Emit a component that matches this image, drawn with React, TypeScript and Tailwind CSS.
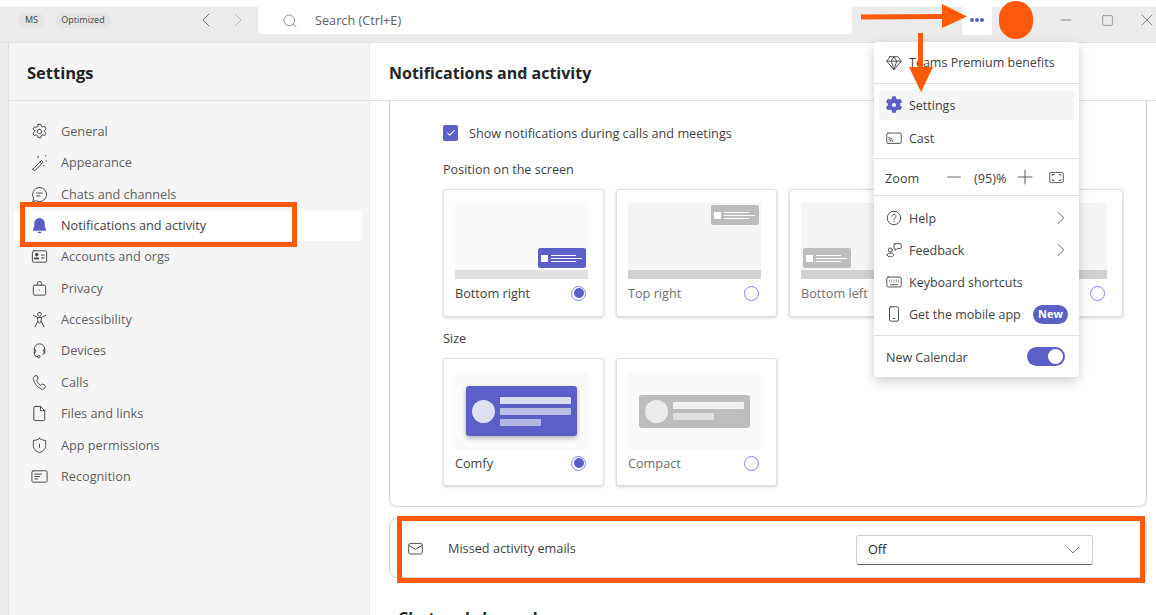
import React from "react";
import { ChevronLeft, ChevronRight, ChevronDown, Search, Minus, Square, X, Plus, Check } from "lucide-react";

const FONT = "font-['Open_Sans','Noto_Sans',sans-serif]";

function Icon({ children, cls = "w-[18px] h-[18px] shrink-0 text-[#424242]" }: { children: React.ReactNode; cls?: string }) {
  return (
    <svg viewBox="0 0 20 20" fill="none" stroke="currentColor" strokeWidth="1" strokeLinecap="round" strokeLinejoin="round" className={cls}>
      {children}
    </svg>
  );
}

const gear = (
  <path d="M8.600 2.400h2.800l.5 2 1.600.9 2-.6 1.400 2.400-1.500 1.400v1.900l1.500 1.400-1.400 2.400-2-.6-1.600.9-.5 2H8.600l-.5-2-1.600-.9-2 .6-1.400-2.400 1.500-1.400V8.900L3.100 7.500l1.400-2.400 2 .6 1.600-.9z M10 7.700a2.300 2.300 0 1 0 0 4.600 2.300 2.300 0 0 0 0-4.600z" />
);

const navItems: { label: string; icon: React.ReactNode }[] = [
  { label: "General", icon: gear },
  {
    label: "Appearance",
    icon: <path d="M3 17l9-9 1.800 1.800-9 9L3 17z M10.500 9.500l1.800 1.800 M8.500 3.500v1.500 M16.500 2.500v.5 M17.500 8.500h-.5 M14.500 13v.5" />,
  },
  {
    label: "Chats and channels",
    icon: <path d="M10 2.500a7.500 7.500 0 1 1-3.600 14.100L3 17.500l.9-3.400A7.500 7.500 0 0 1 10 2.500z M7 8.500h6 M7 11.500h3.500" />,
  },
  { label: "Notifications and activity", icon: null },
  {
    label: "Accounts and orgs",
    icon: (
      <>
        <rect x="2.500" y="4" width="15" height="12" rx="1.500" />
        <circle cx="7" cy="8" r="1.300" fill="currentColor" />
        <path d="M5 12.500h4v-1H5z" fill="currentColor" />
        <path d="M12 8.500h3 M12 11.500h3" />
      </>
    ),
  },
  {
    label: "Privacy",
    icon: <path d="M5 6.500h10a1.500 1.500 0 0 1 1.500 1.500v7.500A1.500 1.500 0 0 1 15 17H5a1.500 1.500 0 0 1-1.500-1.500V8A1.500 1.500 0 0 1 5 6.500z M7.700 6.500V4.800a2.300 2.300 0 0 1 4.600 0v1.700 M10 11.700v.01" />,
  },
  {
    label: "Accessibility",
    icon: <path d="M10 2.500a2 2 0 1 1 0 4 2 2 0 0 1 0-4z M3.500 5.500l4.500 2.500h4l4.500-2.500 M8 8l.3 4-3 5.500 M12 8l-.3 4 3 5.500 M8.300 12l1.700 2 1.700-2" />,
  },
  {
    label: "Devices",
    icon: <path d="M4.500 12.500V8.500a5.500 5.500 0 0 1 11 0v3.500c0 1.500-1 2-2 2 M4.500 8.500c1 0 1.500.5 1.500 1.500v1c0 1-.5 1.500-1.500 1.500 M15.500 8.500c-1 0-1.500.5-1.500 1.500v1c0 1 .5 1.500 1.500 1.500 M4.500 12.500c0 2.500 1 4 3.500 4 M8 16.500a1.300 1.300 0 1 0 2.600 0 1.300 1.300 0 0 0-2.600 0z" />,
  },
  {
    label: "Calls",
    icon: <path d="M6.500 2.800 4.800 3.500C3.500 4.200 3.200 5.500 3.600 7c1 4.200 4.300 8.300 8.300 9.800 1.300.5 2.600.2 3.400-.9l.8-1.200c.4-.6.2-1.300-.4-1.700l-2-1.200c-.6-.3-1.200-.2-1.600.3l-.7.8c-2.200-1-3.800-3-4.500-5.200l.9-.6c.5-.4.7-1 .5-1.600L7.800 3.400c-.2-.5-.8-.8-1.300-.6z" />,
  },
  {
    label: "Files and links",
    icon: <path d="M5.500 2.500h5.500l4.500 4.500v9a1.500 1.500 0 0 1-1.500 1.500H5.500A1.500 1.500 0 0 1 4 16V4a1.500 1.500 0 0 1 1.500-1.500z M11 2.500V7h4.500" />,
  },
  {
    label: "App permissions",
    icon: <path d="M10 2.500c2 1.500 4 2 6.500 2.200v5.300c0 3.500-2.500 6-6.500 7.500-4-1.500-6.500-4-6.500-7.500V4.700C6 4.500 8 4 10 2.500z M10 8.500v.01 M10 9v3" />,
  },
  {
    label: "Recognition",
    icon: <path d="M3.500 4h13A1.500 1.500 0 0 1 18 5.500v9a1.500 1.500 0 0 1-1.500 1.500h-13A1.500 1.500 0 0 1 2 14.500v-9A1.500 1.500 0 0 1 3.500 4z M5 7.500h7 M5 10h5 M5 12.500h3" />,
  },
];

function MiniToast({ active, corner }: { active?: boolean; corner: "br" | "tr" | "bl" | "tl" }) {
  const justify = corner === "br" || corner === "tr" ? "justify-end" : "justify-start";
  const align = corner === "br" || corner === "bl" ? "items-end" : "items-start";
  return (
    <div className={`flex flex-col w-[133px] h-[76px] shrink-0 ${active ? "bg-[#fafafa]" : "bg-[#f5f5f5]"}`}>
      <div className={`flex flex-1 p-[2px] ${justify} ${align}`}>
        <div className={`flex items-center gap-[3px] w-[48px] h-[20px] rounded-[2px] px-[3px] ${active ? "bg-[#5b5fc7]" : "bg-[#bdbdbd]"}`}>
          <div className="w-[7px] h-[7px] bg-white shrink-0" />
          <div className="flex flex-col gap-[2px] flex-1">
            <div className="h-px w-[25px] bg-white" />
            <div className="h-px w-[31px] bg-white" />
            <div className="h-px w-[25px] bg-white" />
          </div>
        </div>
      </div>
      <div className={`h-[9px] ${active ? "bg-[#e0e0e0]" : "bg-[#d1d1d1]"}`} />
    </div>
  );
}

function Radio({ on }: { on?: boolean }) {
  return (
    <div className="w-[15px] h-[15px] rounded-full border border-[#7f85f5] bg-white flex items-center justify-center">
      {on && <div className="w-[10px] h-[10px] rounded-full bg-[#5b5fc7]" />}
    </div>
  );
}

function Tile({ label, on, size, children }: { label: string; on?: boolean; size?: boolean; children: React.ReactNode }) {
  return (
    <div className={`w-[161px] h-[128px] rounded-[3px] bg-white border border-[#e0e0e0] shadow-[0_1px_3px_rgba(0,0,0,0.18)] flex flex-col px-[11px] ${size ? "pt-[14px]" : "pt-[13px]"}`}>
      {children}
      <div className="flex items-center justify-between pr-[6px] mt-[4px]">
        <span className={`text-[12.7px] leading-[20px] ${on ? "text-[#424242]" : "text-[#707070]"}`}>{label}</span>
        <Radio on={on} />
      </div>
    </div>
  );
}

function SizePreview({ active }: { active?: boolean }) {
  const body = active ? "bg-[#5b5fc7] h-[50px] shadow-[0_2px_5px_rgba(0,0,0,0.3)]" : "bg-[#bdbdbd] h-[33px]";
  return (
    <div className="w-[133px] h-[76px] shrink-0 rounded-[3px] bg-[#fafafa] flex items-center justify-center">
      <div className={`w-[111px] rounded-[3px] flex items-center gap-[5px] px-[6px] ${body}`}>
        <div className={`w-[23px] h-[23px] rounded-full shrink-0 ${active ? "bg-[#e0e0f5]" : "bg-[#ebebeb]"}`} />
        <div className="flex flex-col gap-[4px] flex-1">
          <div className={`h-[7px] rounded-[1px] ${active ? "bg-[#dcdcf2]" : "bg-[#f0f0f0]"}`} />
          {active && <div className="h-[7px] rounded-[1px] bg-[#bcbde6]" />}
          <div className={`h-[7px] w-[41px] rounded-[1px] ${active ? "bg-[#b4b6e3]" : "bg-[#e0e0e0]"}`} />
        </div>
      </div>
    </div>
  );
}

function MenuRow({ icon, label, chevron, hover, badge }: { icon: React.ReactNode; label: string; chevron?: boolean; hover?: boolean; badge?: boolean }) {
  return (
    <div className={`mx-[5px] h-[30px] rounded-[4px] flex items-center pl-[6px] pr-[6px] gap-[6px] ${hover ? "bg-[#f5f5f5]" : ""}`}>
      {icon}
      <span className="text-[12.5px] text-[#424242] flex-1 whitespace-nowrap translate-y-[1px]">{label}</span>
      {chevron && <ChevronRight className="w-[22px] h-[22px] -mr-[4px] text-[#616161]" strokeWidth={1} />}
      {badge && (
        <span className="w-[35px] h-[19px] rounded-full bg-[#5b5fc7] text-white text-[11px] font-bold flex items-center justify-center">New</span>
      )}
    </div>
  );
}

export default function App() {
  return (
    <div className={`relative w-[1156px] h-[615px] overflow-hidden bg-white flex flex-col text-[#424242] ${FONT}`}>
      <div className="h-[7px] shrink-0 bg-white" />
      <div className="h-[36px] shrink-0 bg-[#ebebeb] border-b border-[#e0e0e0] flex items-start">
        <div className="flex items-center gap-[10px] pl-[18px] h-[26px] w-[190px] shrink-0">
          <span className="w-[27px] h-[15px] rounded-full bg-[#e4e4e4] text-[9px] flex items-center justify-center">MS</span>
          <span className="w-[56px] h-[15px] rounded-full bg-[#e4e4e4] text-[9px] flex items-center justify-center">Optimized</span>
        </div>
        <div className="h-[26px] flex items-center gap-[8px] ml-[4px] w-[64px] shrink-0">
          <ChevronLeft className="w-[24px] h-[24px] text-[#616161]" strokeWidth={0.9} />
          <ChevronRight className="w-[24px] h-[24px] text-[#b0b0b0]" strokeWidth={0.9} />
        </div>
        <div className="w-[594px] shrink-0 h-[27px] bg-white rounded-b-[4px] flex items-center pl-[24px] gap-[17px] text-[12.7px] text-[#616161]">
          <Search className="w-[16px] h-[16px] text-[#616161]" strokeWidth={1} />
          <span>Search (Ctrl+E)</span>
        </div>
        <div className="ml-[110px] w-[30px] shrink-0 h-[28px] pb-[3px] bg-white rounded-b-[3px] flex items-center justify-center gap-[1px]">
          <i className="w-[4px] h-[4px] rounded-full bg-[#5b5fc7]" />
          <i className="w-[4px] h-[4px] rounded-full bg-[#5b5fc7]" />
          <i className="w-[4px] h-[4px] rounded-full bg-[#5b5fc7]" />
        </div>
        <div className="h-[26px] flex items-center ml-[66px] shrink-0 text-[#707070]">
          <Minus className="w-[16px] h-[16px]" strokeWidth={1.2} />
          <Square className="w-[13px] h-[13px] ml-[27px]" strokeWidth={1.2} />
          <X className="w-[20px] h-[20px] ml-[23px]" strokeWidth={1} />
        </div>
      </div>

      <div className="flex flex-1 min-h-0">
        <div className="w-[9px] shrink-0 bg-[#ebebeb] border-r border-[#e0e0e0]" />
        <aside className="w-[361px] shrink-0 bg-[#f5f5f5] border-r border-[#ebebeb] flex flex-col">
          <div className="h-[58px] shrink-0 border-b border-[#e0e0e0] flex items-center pl-[18px] pt-[4px] text-[16.5px] font-bold text-[#242424]">Settings</div>
          <nav className="flex flex-col pt-[14.55px] pl-[5px] pr-[7px]">
            {navItems.map((n) => {
              const active = n.label === "Notifications and activity";
              return (
                <div key={n.label} className={`h-[31.4px] flex items-center pl-[16px] gap-[12px] rounded-[3px] text-[12.7px] ${active ? "bg-white text-[#424242]" : "text-[#616161]"}`}>
                  {active ? (
                    <svg viewBox="0 0 20 20" className="w-[19px] h-[19px] text-[#5b5fc7]" fill="currentColor">
                      <path d="M10 2a5.500 5.500 0 0 0-5.500 5.500v3.200L3 14.500c-.2.5.1 1 .7 1h12.600c.6 0 .9-.5.7-1l-1.500-3.800V7.500A5.500 5.500 0 0 0 10 2z M7.800 16.500a2.300 2.300 0 0 0 4.400 0z" />
                    </svg>
                  ) : (
                    <Icon cls="w-[19px] h-[19px] text-[#424242]">{n.icon}</Icon>
                  )}
                  <span>{n.label}</span>
                </div>
              );
            })}
          </nav>
        </aside>

        <main className="flex-1 min-w-0 flex flex-col">
          <div className="h-[58px] shrink-0 border-b border-[#e0e0e0] flex items-center pl-[19px] pt-[2px] text-[16px] font-bold text-[#242424]">Notifications and activity</div>
          <div className="pl-[19px] pr-[9px]">
            <div className="h-[406px] border border-t-0 border-[#d1d1d1] rounded-b-[8px] pl-[53px] pt-[23px]">
              <div className="flex items-center gap-[11px] h-[18px]">
                <div className="w-[15px] h-[16px] rounded-[2px] bg-[#5b5fc7] flex items-center justify-center">
                  <Check className="w-[10px] h-[10px] text-white" strokeWidth={2.5} />
                </div>
                <span className="text-[12.7px] translate-y-[1px]">Show notifications during calls and meetings</span>
              </div>
              <div className="text-[12.6px] mt-[18px] leading-[18px] translate-y-[1px]">Position on the screen</div>
              <div className="flex gap-[12px] mt-[11px]">
                <Tile label="Bottom right" on><MiniToast active corner="br" /></Tile>
                <Tile label="Top right"><MiniToast corner="tr" /></Tile>
                <Tile label="Bottom left"><MiniToast corner="bl" /></Tile>
                <Tile label="Top left"><MiniToast corner="tl" /></Tile>
              </div>
              <div className="text-[12.7px] mt-[12px] leading-[18px]">Size</div>
              <div className="flex gap-[12px] mt-[11px]">
                <Tile size label="Comfy" on><SizePreview active /></Tile>
                <Tile size label="Compact"><SizePreview /></Tile>
              </div>
            </div>
            <div className="mt-[11px] h-[60px] border border-[#d1d1d1] rounded-[8px] flex items-center pl-[17px] pt-[4px]">
              <svg viewBox="0 0 20 20" className="w-[17px] h-[17px] text-[#424242] -translate-y-[2px]" fill="none" stroke="currentColor" strokeWidth="1.1">
                <rect x="2" y="4" width="16" height="12.500" rx="2" />
                <path d="M2.500 6.500 10 11l7.500-4.500" />
              </svg>
              <span className="text-[12.7px] ml-[24px] w-[408px] -translate-y-[1px]">Missed activity emails</span>
              <div className="w-[237px] h-[30px] rounded-[3px] border border-[#d1d1d1] border-b-[#616161] flex items-center justify-between pl-[11px] pr-[7px]">
                <span className="text-[12.7px] text-[#242424]">Off</span>
                <ChevronDown className="w-[24px] h-[24px] text-[#707070]" strokeWidth={0.9} />
              </div>
            </div>
            <div className="mt-[28px] ml-[9px] text-[16px] font-bold text-[#242424]">Chat and channels</div>
          </div>
        </main>
      </div>

      {/* Overflow menu */}
      <div className="absolute left-[874px] top-[42px] w-[205px] h-[335px] bg-white rounded-[4px] shadow-[0_4px_12px_rgba(0,0,0,0.2)] flex flex-col">
        <div className="h-[42px] flex items-center border-b border-[#e0e0e0]">
          <div className="w-full">
            <MenuRow label="Teams Premium benefits" icon={<Icon><path d="M5.500 3h9l3.500 5-8 9.500L2 8l3.500-5z M2 8h16 M7 8l3 9.500L13 8 M7 8l3-5 3 5" /></Icon>} />
          </div>
        </div>
        <div className="pt-[6px] h-[75px] border-b border-[#e0e0e0]">
          <MenuRow hover label="Settings" icon={<svg viewBox="1.500 1.500 17 17" className="w-[18px] h-[18px] shrink-0 text-[#5b5fc7]" fill="currentColor"><path fillRule="evenodd" d="M8.300 1.800h3.400l.5 2.200 1.500.9 2.200-.7 1.700 2.900-1.700 1.600v1.800l1.700 1.600-1.700 2.900-2.200-.7-1.500.9-.5 2.200H8.300l-.5-2.200-1.500-.9-2.200.7-1.700-2.900 1.700-1.600V8.700L2.400 7.100l1.700-2.900 2.200.7 1.500-.9zM10 8a2 2 0 1 0 0 4 2 2 0 0 0 0-4z" /></svg>} />
          <div className="mt-[3px]">
            <MenuRow label="Cast" icon={<Icon><rect x="2" y="4.500" width="16" height="11.500" rx="1.200" /><path d="M4.500 9.500a4 4 0 0 1 4 4 M4.500 11.500a2 2 0 0 1 2 2 M4.500 13.500h.01" /></Icon>} />
          </div>
        </div>
        <div className="h-[37px] border-b border-[#e0e0e0] flex items-center pl-[11px] pr-[14px] text-[12.7px]">
          <span className="w-[58px] translate-y-[2px]">Zoom</span>
          <Minus className="w-[22px] h-[22px] text-[#616161]" strokeWidth={1} />
          <span className="ml-[9px] w-[39px] translate-y-[2px]">(95)%</span>
          <Plus className="w-[24px] h-[24px] text-[#616161]" strokeWidth={1} />
          <svg viewBox="0 0 20 20" className="w-[17px] h-[17px] ml-auto text-[#424242]" fill="none" stroke="currentColor" strokeWidth="1">
            <rect x="2" y="4" width="16" height="12" rx="2" />
            <path d="M5 8V6.500h2.500 M12.500 6.500H15V8 M15 12v1.500h-2.500 M7.500 13.500H5V12" />
          </svg>
        </div>
        <div className="h-[140px] border-b border-[#e0e0e0] pt-[7px] flex flex-col gap-[2px]">
          <MenuRow chevron label="Help" icon={<Icon><circle cx="10" cy="10" r="7.500" /><path d="M7.800 8a2.200 2.200 0 1 1 3.300 2c-.7.4-1.100.8-1.100 1.700 M10 14v.01" /></Icon>} />
          <MenuRow chevron label="Feedback" icon={<Icon><circle cx="6" cy="10" r="2.200" /><path d="M2.500 15.500c0-1.200 1-2 2-2h3c1 0 2 .8 2 2 0 1.500-1.500 2-3.500 2s-3.500-.5-3.500-2z M11 3h6a1 1 0 0 1 1 1v3.500a1 1 0 0 1-1 1h-3.500l-2 2V8.500A1 1 0 0 1 10 7.500V4a1 1 0 0 1 1-1z" /></Icon>} />
          <MenuRow label="Keyboard shortcuts" icon={<Icon><rect x="2" y="4.500" width="16" height="11" rx="1.500" /><path d="M5 8h.01 M7.500 8h.01 M10 8h.01 M12.500 8h.01 M15 8h.01 M5 10h.01 M7.500 10h.01 M10 10h.01 M12.500 10h.01 M15 10h.01 M6 13h8" /></Icon>} />
          <MenuRow badge label="Get the mobile app" icon={<Icon><rect x="5" y="2" width="10" height="16" rx="1.500" /><path d="M9 15h2" /></Icon>} />
        </div>
        <div className="flex-1 flex items-center justify-between pl-[12px] pr-[14px] text-[12.5px]">
          <span className="translate-y-[2px]">New Calendar</span>
          <div className="w-[38px] h-[19px] rounded-full bg-[#5b5fc7] flex items-center justify-end pr-[2px]">
            <div className="w-[15px] h-[15px] rounded-full bg-white" />
          </div>
        </div>
      </div>

      {/* Orange annotations */}
      <div className="absolute left-[999px] top-[1px] w-[34px] h-[38px] rounded-full bg-[#ff5a0a]" />
      <div className="absolute left-[20px] top-[202px] w-[277px] h-[45px] border-[5px] border-[#ff5a0a]" />
      <div className="absolute left-[397px] top-[516px] w-[748px] h-[67px] border-[5px] border-[#ff5a0a]" />
      <svg viewBox="0 0 1156 615" className="absolute inset-0 w-[1156px] h-[615px] pointer-events-none">
        <path d="M861 14.500 942 14v5l-81 .5z" fill="#ff5a0a" />
        <path d="M942 4l25 12.500L942 28z" fill="#ff5a0a" />
        <rect x="918" y="33" width="5" height="36" fill="#ff5a0a" />
        <path d="M909 67h24l-12 25z" fill="#ff5a0a" />
      </svg>
    </div>
  );
}
